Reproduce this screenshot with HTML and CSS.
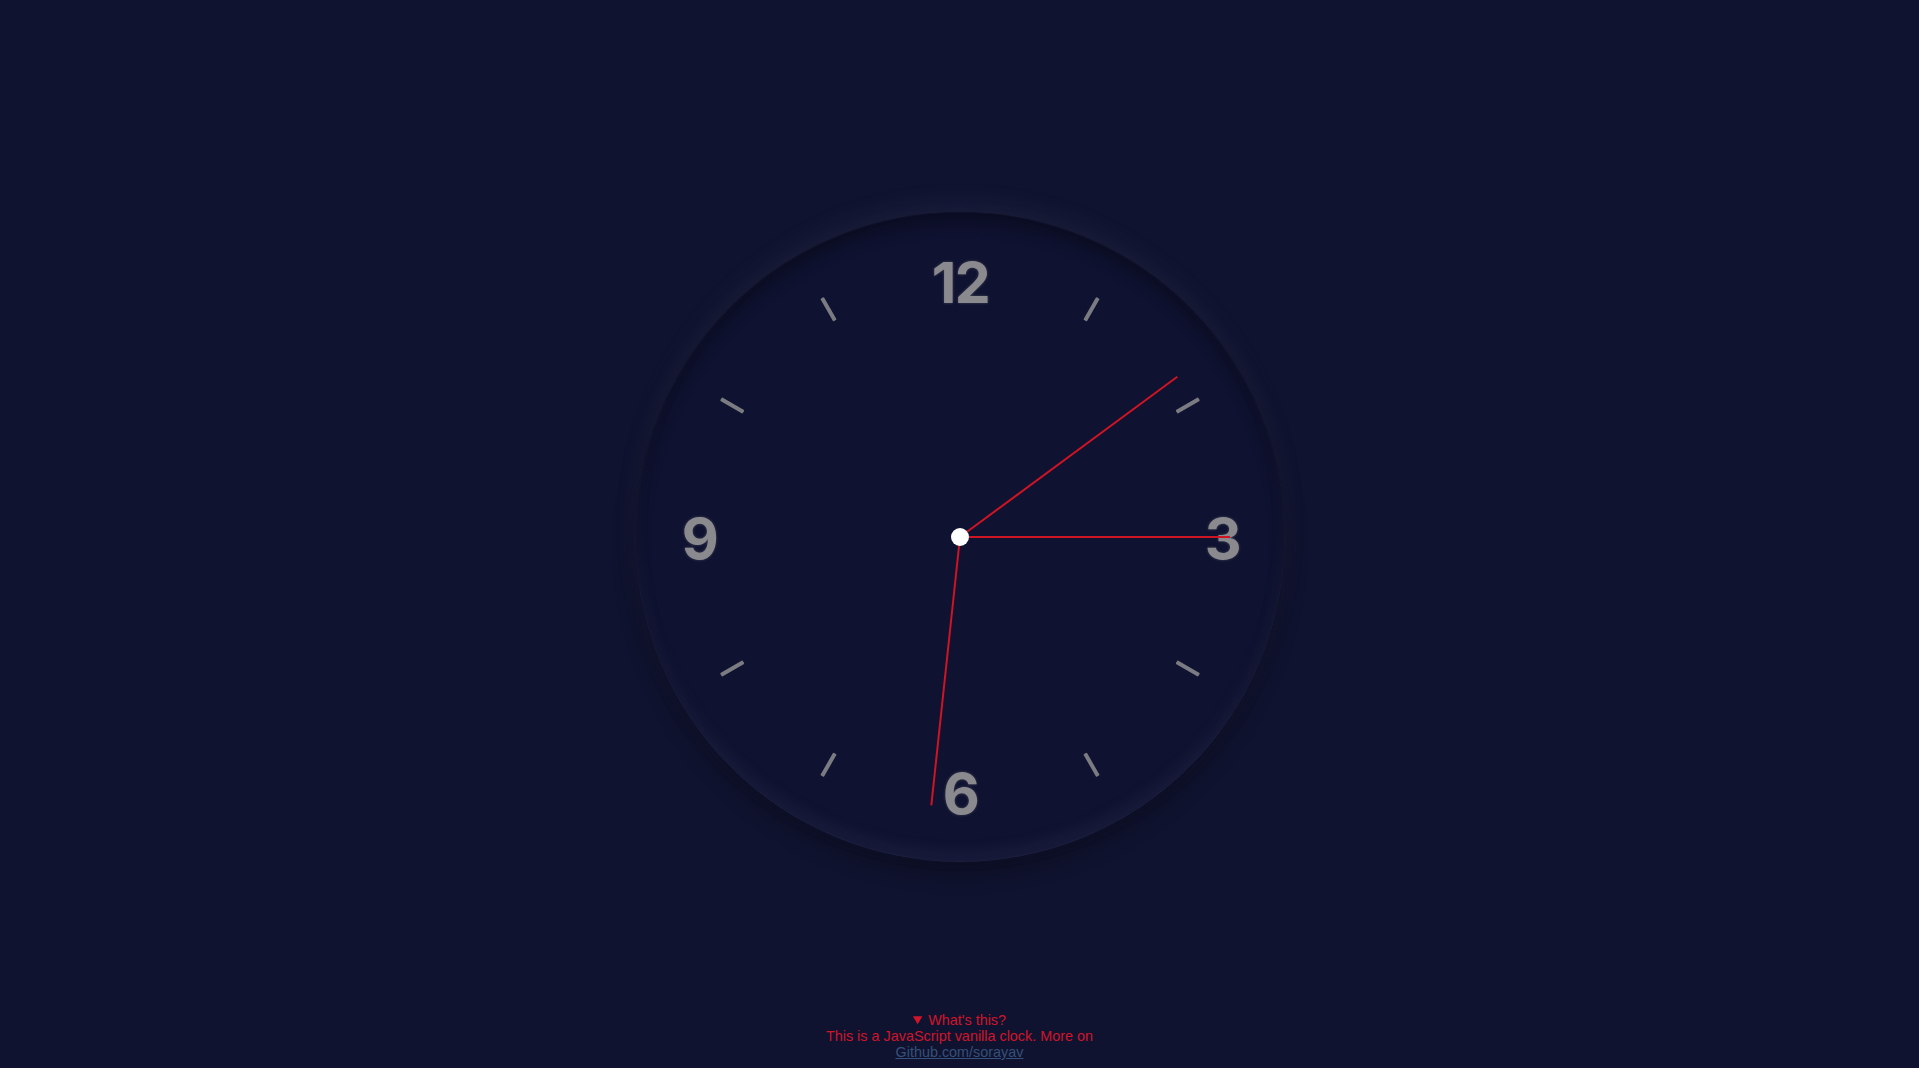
FILE: index.html
```html
<!DOCTYPE html>
<html lang="en">
<head>
<meta charset="utf-8">
<title>Vanilla JS Clock</title>
<link rel="stylesheet" href="styles.css">
</head>
<body>
<div class="stage">
  <div class="clock">
    <span class="num n12">12</span>
    <span class="num n3">3</span>
    <span class="num n6">6</span>
    <span class="num n9">9</span>
    <span class="tick t1"></span>
    <span class="tick t2"></span>
    <span class="tick t4"></span>
    <span class="tick t5"></span>
    <span class="tick t7"></span>
    <span class="tick t8"></span>
    <span class="tick t10"></span>
    <span class="tick t11"></span>
    <span class="hand hand-hour"></span>
    <span class="hand hand-min"></span>
    <span class="hand hand-sec"></span>
    <span class="pin"></span>
  </div>
  <footer class="info">
    <details open>
      <summary>What's this?</summary>
      <p>This is a JavaScript vanilla clock. More on<br><a href="#">Github.com/sorayav</a></p>
    </details>
  </footer>
</div>
</body>
</html>
```
FILE: styles.css
```css
html, body {
  margin: 0;
  padding: 0;
  height: 100%;
}
body {
  background: #10132f;
  font-family: "Liberation Sans", Arial, sans-serif;
  overflow: hidden;
}
.stage {
  display: grid;
  grid-template-areas: "stack";
  height: 100vh;
  justify-items: center;
}
.clock {
  grid-area: stack;
  align-self: center;
  margin-top: 6px;
  position: relative;
  width: 650px;
  height: 650px;
  border-radius: 50%;
  background: #0f1230;
  box-shadow:
    0 -10px 24px rgba(150, 155, 210, 0.08),
    0 10px 22px rgba(0, 0, 0, 0.32),
    inset 0 10px 16px rgba(0, 0, 0, 0.3),
    inset 0 -10px 16px rgba(150, 155, 210, 0.08),
    inset 0 0 0 1px rgba(150, 155, 210, 0.04);
}
.num {
  position: absolute;
  transform: translate(-50%, -50%);
  font-family: Inter, "Open Sans", sans-serif;
  font-weight: 700;
  font-size: 57px;
  line-height: 1;
  color: #8a8a8e;
  letter-spacing: -1.5px;
  text-shadow: 0 0 3px rgba(138, 138, 142, 0.45);
}
.n12 { left: 326px; top: 70px; }
.n3  { left: 588px; top: 326px; }
.n6  { left: 326px; top: 581px; }
.n9  { left: 65px;  top: 326px; }

.tick {
  position: absolute;
  left: 323px;
  top: 312px;
  width: 4px;
  height: 26px;
  background: #7b7b82;
  border-radius: 1px;
  transform-origin: 2px 13px;
}
.t1  { transform: rotate(30deg)  translateY(-263px); }
.t2  { transform: rotate(60deg)  translateY(-263px); }
.t4  { transform: rotate(120deg) translateY(-263px); }
.t5  { transform: rotate(150deg) translateY(-263px); }
.t7  { transform: rotate(210deg) translateY(-263px); }
.t8  { transform: rotate(240deg) translateY(-263px); }
.t10 { transform: rotate(300deg) translateY(-263px); }
.t11 { transform: rotate(330deg) translateY(-263px); }

.hand {
  position: absolute;
  left: 324px;
  bottom: 325px;
  width: 2px;
  height: 270px;
  background: #cf1424;
  transform-origin: 1px 270px;
}
.hand-hour { transform: rotate(90deg); }
.hand-min  { transform: rotate(53.6deg); }
.hand-sec  { transform: rotate(186.1deg); }

.pin {
  position: absolute;
  left: 316px;
  top: 316px;
  width: 18px;
  height: 18px;
  border-radius: 50%;
  background: #ffffff;
}

.info {
  grid-area: stack;
  align-self: end;
  padding-bottom: 8px;
  text-align: center;
  color: #d0142c;
  font-size: 14.4px;
}
.info details {
  margin: 0;
}
.info summary {
  display: list-item;
  list-style-position: inside;
  cursor: pointer;
}
.info p {
  margin: 0;
}
.info a {
  color: #34507a;
}
```
